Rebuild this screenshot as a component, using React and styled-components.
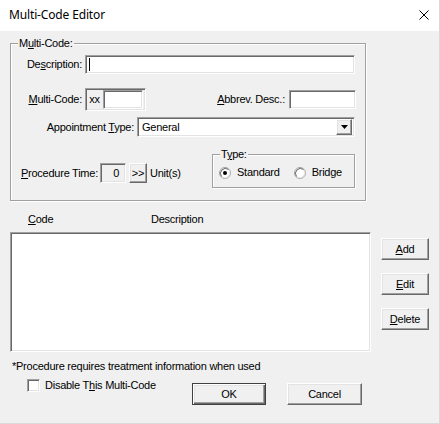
import React from "react";
import styled, { createGlobalStyle } from "styled-components";

const GlobalStyle = createGlobalStyle`
  html, body {
    margin: 0;
    padding: 0;
    background: #f0f0f0;
  }
  * { box-sizing: border-box; }
`;

const Window = styled.div`
  width: 440px;
  height: 424px;
  background: #f0f0f0;
  border-right: 1px solid #d9d9d9;
  border-bottom: 1px solid #d9d9d9;
  font-family: "Liberation Sans", Arial, sans-serif;
  font-size: 11px;
  line-height: 13px;
  letter-spacing: -0.25px;
  color: #000;
  display: flex;
  flex-direction: column;
  overflow: hidden;
`;

const TitleBar = styled.div`
  height: 31px;
  flex: none;
  background: #fff;
  display: flex;
  align-items: center;
  justify-content: space-between;
  padding: 0 10px 1px 9px;
`;

const Title = styled.span`
  font-family: "Segoe UI", "Noto Sans", sans-serif;
  font-size: 12px;
  line-height: 16px;
  letter-spacing: -0.15px;
  color: #000;
`;

const Body = styled.div`
  padding: 12px 0 0 10px;
  display: flex;
  flex-direction: column;
`;

const GroupBox = styled.div`
  position: relative;
  flex: none;
  width: ${(p) => p.$w}px;
  height: ${(p) => p.$h}px;
  border: 1px solid #a0a0a0;
  box-shadow: inset 1px 1px 0 #fff, 1px 1px 0 #fff;
  margin-left: ${(p) => p.$ml || "0"};
  margin-right: ${(p) => p.$mr || 0}px;
`;

const Legend = styled.span`
  position: absolute;
  top: -7px;
  left: 7px;
  padding: 0 1px;
  background: #f0f0f0;
`;

const Row = styled.div`
  display: flex;
  align-items: ${(p) => p.$align || "center"};
  margin-top: ${(p) => p.$mt || 0}px;
`;

const Cluster = styled.div`
  display: flex;
  align-items: center;
  margin-top: ${(p) => p.$mt || 0}px;
`;

const Label = styled.span`
  width: ${(p) => (p.$w ? `${p.$w}px` : "auto")};
  flex: none;
  text-align: ${(p) => p.$align || "right"};
  padding-left: ${(p) => p.$pl || 0}px;
  margin-left: ${(p) => p.$ml || "0"};
  margin-right: ${(p) => (p.$gap === undefined ? 3 : p.$gap)}px;
  white-space: nowrap;
`;

const sunken = `
  border: 1px solid;
  border-color: #a0a0a0 #fff #fff #a0a0a0;
  box-shadow: inset 1px 1px 0 #696969, inset -1px -1px 0 #e3e3e3;
`;

const raised = `
  border: 1px solid;
  border-color: #fff #696969 #696969 #fff;
  box-shadow: inset -1px -1px 0 #a0a0a0, inset 1px 1px 0 #e3e3e3;
  background: #f0f0f0;
`;

const EditBox = styled.div`
  ${sunken}
  width: ${(p) => p.$w}px;
  height: ${(p) => p.$h || 19}px;
  flex: none;
  background: ${(p) => (p.$gray ? "#f0f0f0" : "#fff")};
  display: flex;
  align-items: center;
  justify-content: ${(p) => (p.$right ? "flex-end" : "flex-start")};
  padding: 0 ${(p) => (p.$right ? 6 : 2)}px;
  margin-right: ${(p) => p.$mr || 0}px;
`;

const Caret = styled.span`
  width: 1px;
  height: 13px;
  background: #000;
  margin-left: 1px;
`;

const Prefix = styled.span`
  width: 15px;
  text-align: center;
  margin-left: -1px;
`;

const InnerEdit = styled.div`
  ${sunken}
  width: 40px;
  height: 19px;
  background: #fff;
  margin-left: auto;
`;

const Combo = styled.div`
  ${sunken}
  width: 218px;
  height: 20px;
  flex: none;
  background: #fff;
  display: flex;
  align-items: center;
  padding: 0 2px 0 4px;
`;

const ComboText = styled.span`
  flex: 1;
`;

const DropButton = styled.div`
  ${raised}
  width: 16px;
  height: 16px;
  display: flex;
  align-items: center;
  justify-content: center;
`;

const Button = styled.div`
  ${raised}
  width: ${(p) => p.$w}px;
  height: ${(p) => p.$h || 22}px;
  flex: none;
  display: flex;
  align-items: center;
  justify-content: center;
  margin-left: ${(p) => p.$ml || 0}px;
  ${(p) =>
    p.$default &&
    `
    border: 1px solid #404040;
    box-shadow: inset 1px 1px 0 #fff, inset -1px -1px 0 #696969, inset -2px -2px 0 #a0a0a0, inset 2px 2px 0 #e3e3e3;
  `}
`;

const Unit = styled.span`
  margin-left: 3px;
`;

const RadioRow = styled.div`
  display: flex;
  align-items: center;
  padding: 11px 0 0 6px;
`;

const RadioItem = styled.label`
  display: flex;
  align-items: center;
  margin-right: ${(p) => p.$mr || 0}px;
  gap: 6px;
`;

const HeaderRow = styled.div`
  display: flex;
  margin-top: 12px;
  padding-left: 18px;
`;

const HeaderCell = styled.span`
  width: ${(p) => p.$w || "auto"};
`;

const ListArea = styled.div`
  display: flex;
  margin-top: 6px;
`;

const ListBox = styled.div`
  ${sunken}
  width: 361px;
  height: 120px;
  background: #fff;
`;

const SideButtons = styled.div`
  display: flex;
  flex-direction: column;
  gap: 13px;
  padding: 6px 0 0 10px;
`;

const Footnote = styled.div`
  margin-top: 8px;
  padding-left: 2px;
`;

const BottomRow = styled.div`
  display: flex;
  align-items: flex-start;
  margin-top: 6px;
  padding-left: 17px;
`;

const CheckLabel = styled.label`
  display: flex;
  align-items: center;
  gap: 5px;
  width: 165px;
`;

const CheckBox = styled.span`
  ${sunken}
  width: 13px;
  height: 13px;
  background: #fff;
  flex: none;
`;

const Buttons = styled.div`
  display: flex;
  gap: 21px;
  margin-top: 4px;
`;

const CloseIcon = () => (
  <svg width="10" height="10" viewBox="0 0 10 10">
    <path d="M0.5 0.5 L9.5 9.5 M9.5 0.5 L0.5 9.5" stroke="#000" strokeWidth="1" fill="none" />
  </svg>
);

const Arrow = () => (
  <svg width="7" height="4" viewBox="0 0 7 4">
    <path d="M0 0 H7 L3.5 4 Z" fill="#000" />
  </svg>
);

const Radio = ({ checked }) => (
  <svg width="12" height="12" viewBox="0 0 12 12">
    <circle cx="6" cy="6" r="5.5" fill="#fff" stroke="#a0a0a0" />
    <path d="M2.5 9.5 A5 5 0 0 1 9.5 2.5" stroke="#696969" fill="none" />
    <path d="M9.8 2.8 A5 5 0 0 1 2.8 9.8" stroke="#e3e3e3" fill="none" />
    {checked && <circle cx="6" cy="6" r="2" fill="#000" />}
  </svg>
);

const U = styled.u`
  text-decoration: underline;
  text-underline-offset: 1px;
`;

export default function App() {
  return (
    <>
      <GlobalStyle />
      <Window>
        <TitleBar>
          <Title>Multi-Code Editor</Title>
          <CloseIcon />
        </TitleBar>
        <Body>
          <GroupBox $w={356} $h={158}>
            <Legend>
              M<U>u</U>lti-Code:
            </Legend>
            <Row $mt={11}>
              <Label $w={71}>
                De<U>s</U>cription:
              </Label>
              <EditBox $w={270}>
                <Caret />
              </EditBox>
            </Row>
            <Row $mt={14}>
              <Label $w={71}>
                <U>M</U>ulti-Code:
              </Label>
              <EditBox $w={61} $h={23} $gray>
                <Prefix>xx</Prefix>
                <InnerEdit />
              </EditBox>
              <Label $ml="auto" $gap={4}>
                <U>A</U>bbrev. Desc.:
              </Label>
              <EditBox $w={67} $mr={9} />
            </Row>
            <Row $mt={6}>
              <Label $w={123}>
                Appointment <U>T</U>ype:
              </Label>
              <Combo>
                <ComboText>General</ComboText>
                <DropButton>
                  <Arrow />
                </DropButton>
              </Combo>
            </Row>
            <Row $mt={17} $align="flex-start">
              <Cluster $mt={9}>
                <Label $w={89} $pl={10} $align="left" $gap={0}>
                  <U>P</U>rocedure Time:
                </Label>
                <EditBox $w={26} $h={20} $gray $right>
                  0
                </EditBox>
                <Button $w={18} $h={20} $ml={3}>
                  &gt;&gt;
                </Button>
                <Unit>Unit(s)</Unit>
              </Cluster>
              <GroupBox $w={143} $h={34} $ml="auto" $mr={10}>
                <Legend>
                  T<U>y</U>pe:
                </Legend>
                <RadioRow>
                  <RadioItem $mr={14}>
                    <Radio checked />
                    Standard
                  </RadioItem>
                  <RadioItem>
                    <Radio />
                    Bridge
                  </RadioItem>
                </RadioRow>
              </GroupBox>
            </Row>
          </GroupBox>

          <HeaderRow>
            <HeaderCell $w="123px">
              <U>C</U>ode
            </HeaderCell>
            <HeaderCell>Description</HeaderCell>
          </HeaderRow>

          <ListArea>
            <ListBox />
            <SideButtons>
              <Button $w={48}>
                <U>A</U>dd
              </Button>
              <Button $w={48}>
                <U>E</U>dit
              </Button>
              <Button $w={48}>
                <U>D</U>elete
              </Button>
            </SideButtons>
          </ListArea>

          <Footnote>*Procedure requires treatment information when used</Footnote>

          <BottomRow>
            <CheckLabel>
              <CheckBox />
              <span>
                Disable T<U>h</U>is Multi-Code
              </span>
            </CheckLabel>
            <Buttons>
              <Button $w={74} $default>
                OK
              </Button>
              <Button $w={75}>Cancel</Button>
            </Buttons>
          </BottomRow>
        </Body>
      </Window>
    </>
  );
}
